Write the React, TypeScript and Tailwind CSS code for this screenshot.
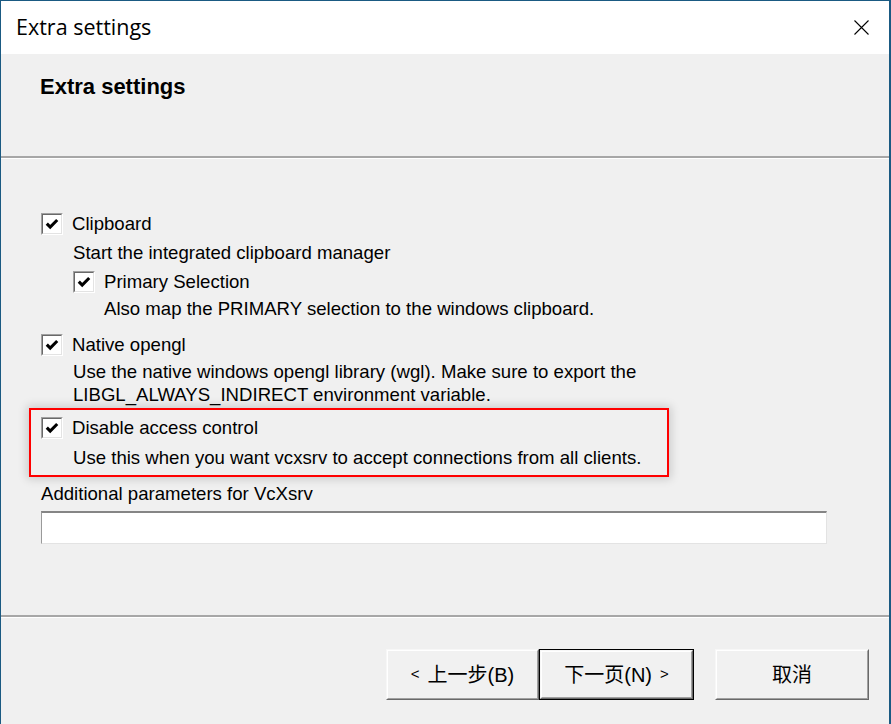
import React from 'react'

const latin = { fontFamily: '"Liberation Sans", Arial, sans-serif' }
const cjk = { fontFamily: '"Liberation Sans", "Noto Sans CJK SC", sans-serif' }

function Checkbox() {
  return (
    <div className="h-[22px] w-[22px] shrink-0 border border-t-[#a0a0a0] border-l-[#a0a0a0] border-r-white border-b-white">
      <div className="flex h-full w-full items-center justify-center border border-t-[#696969] border-l-[#696969] border-r-[#e3e3e3] border-b-[#e3e3e3] bg-white">
        <svg width="14" height="14" viewBox="0 0 14 14">
          <path d="M1.8 6.6 L5.2 10 L12.2 3" fill="none" stroke="#000" strokeWidth="3.1" />
        </svg>
      </div>
    </div>
  )
}

function CheckRow({ label }: { label: string }) {
  return (
    <div className="flex h-[22px] items-center gap-[9px]">
      <Checkbox />
      <span className="leading-[22px]">{label}</span>
    </div>
  )
}

function Line({ children, className = '' }: { children: React.ReactNode; className?: string }) {
  return <div className={`h-[23px] leading-[23px] whitespace-nowrap ${className}`}>{children}</div>
}

function Etched() {
  return (
    <div>
      <div className="h-[2px] bg-[#a7a7a7]" />
      <div className="h-px bg-white" />
    </div>
  )
}

function Button({ children, isDefault = false, className = '' }: { children: React.ReactNode; isDefault?: boolean; className?: string }) {
  const face = (
    <div className="flex h-full w-full items-center justify-center border border-t-white border-l-white border-r-[#a0a0a0] border-b-[#a0a0a0] bg-[#f1f1f1] text-[20px] text-black">
      {children}
    </div>
  )
  const bevel = (
    <div className="h-full w-full border border-t-[#f7f7f7] border-l-[#f7f7f7] border-r-[#696969] border-b-[#696969]">{face}</div>
  )
  return (
    <div className={`h-[51px] ${className}`} style={cjk}>
      {isDefault ? <div className="h-full w-full border border-black">{bevel}</div> : bevel}
    </div>
  )
}

export default function App() {
  return (
    <div className="flex h-[724px] w-[891px] flex-col overflow-hidden border-t border-l border-r-2 border-[#1a5a82] bg-[#f0f0f0] text-black">
      <div className="flex h-[53px] shrink-0 items-center justify-between bg-white pl-[15px] pr-[20px]">
        <span className="text-[21.5px]" style={{ fontFamily: '"Open Sans", sans-serif' }}>
          Extra settings
        </span>
        <svg width="15" height="15" viewBox="0 0 15 15">
          <path d="M0.5 0.5 L14.5 14.5 M14.5 0.5 L0.5 14.5" stroke="#000" strokeWidth="1.1" fill="none" />
        </svg>
      </div>

      <div className="h-[102px] shrink-0 pl-[39px] pt-[20px]">
        <div className="text-[22px] font-bold leading-[26px]" style={latin}>
          Extra settings
        </div>
      </div>
      <Etched />

      <div className="flex-1 pl-[28px] pt-[54px] text-[18.6px]" style={latin}>
        <div className="ml-[12px]">
          <CheckRow label="Clipboard" />
          <Line className="ml-[32px] mt-[6px]">Start the integrated clipboard manager</Line>
          <div className="ml-[32px] mt-[7px]">
            <CheckRow label="Primary Selection" />
            <Line className="ml-[31px] mt-[4px]">Also map the PRIMARY selection to the windows clipboard.</Line>
          </div>
          <div className="mt-[14px]">
            <CheckRow label="Native opengl" />
            <Line className="ml-[32px] mt-[4px]">Use the native windows opengl library (wgl). Make sure to export the</Line>
            <Line className="ml-[32px]">LIBGL_ALWAYS_INDIRECT environment variable.</Line>
          </div>
        </div>

        <div className="mt-[2px] w-[640px] border-2 border-[#ff0000] pb-[6px] pl-[10px] pt-[7px] shadow-[0_0_9px_2px_rgba(0,0,0,0.16)]">
          <CheckRow label="Disable access control" />
          <Line className="ml-[32px] mt-[7px]">Use this when you want vcxsrv to accept connections from all clients.</Line>
        </div>

        <div className="ml-[12px]">
          <Line className="mt-[5px]">Additional parameters for VcXsrv</Line>
          <div className="mt-[6px] h-[33px] w-[786px] border border-t-2 border-t-[#858585] border-l-[#9a9a9a] border-r-[#e3e3e3] border-b-[#e3e3e3] bg-white" />
        </div>
      </div>

      <Etched />
      <div className="flex h-[106px] shrink-0 items-start justify-end pr-[20px] pt-[31px]">
        <Button className="w-[153px]">
          <span className="mr-[8px] text-[15px]">&lt;</span>上一步(B)
        </Button>
        <Button className="w-[155px]" isDefault>
          下一页(N)<span className="ml-[8px] text-[15px]">&gt;</span>
        </Button>
        <Button className="ml-[21px] w-[154px]">取消</Button>
      </div>
    </div>
  )
}
